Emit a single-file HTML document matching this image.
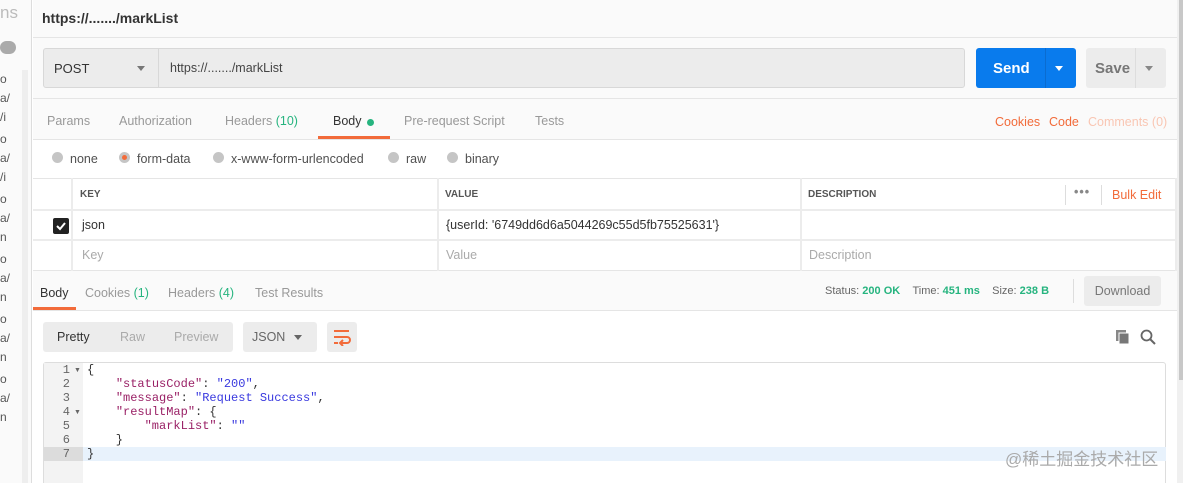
<!DOCTYPE html>
<html><head><meta charset="utf-8"><style>
*{box-sizing:border-box;margin:0;padding:0}
html,body{width:1183px;height:483px;overflow:hidden}
body{background:#fff;font-family:"Liberation Sans","Noto Sans CJK SC",sans-serif;font-size:12.5px;color:#505050;position:relative}
.a{position:absolute}
.g{color:#26b47f}
.o{color:#f26b3a}
.mono{font-family:"Liberation Mono",monospace;font-size:12px}
.sb div{height:60px;line-height:19px}
</style></head><body>
<!-- sidebar -->
<div class="a" style="left:0;top:0;width:32px;height:483px;background:#fafafa;border-right:1px solid #ddd"></div>
<div class="a" style="left:0;top:3px;color:#bbb;font-size:17px">ns</div>
<div class="a" style="left:0;top:41px;width:16px;height:13px;border-radius:7px;background:#aaa"></div>
<div class="a" style="left:22px;top:70px;width:6px;height:413px;background:#eee"></div>
<div class="a sb" style="left:0;top:70px;font-size:12px;color:#555">
<div>o<br>a/<br>/i</div><div>o<br>a/<br>/i</div><div>o<br>a/<br>n</div><div>o<br>a/<br>n</div><div>o<br>a/<br>n</div><div>o<br>a/<br>n</div>
</div>
<!-- main -->
<div class="a" style="left:33px;top:0;width:1144px;height:140px;background:#fafafa"></div>
<div class="a" style="left:33px;top:37px;width:1144px;height:1px;background:#e5e5e5"></div>
<div class="a" style="left:42px;top:10px;font-size:14px;font-weight:bold;color:#333">https://......./markList</div>
<div class="a" style="left:43px;top:48px;width:922px;height:40px;background:#ececec;border:1px solid #d8d8d8;border-radius:3px"></div>
<div class="a" style="left:158px;top:49px;width:1px;height:38px;background:#d8d8d8"></div>
<div class="a" style="left:54px;top:61px;font-size:13px;color:#333">POST</div>
<div class="a" style="left:137px;top:66px;border:4.5px solid transparent;border-top:5px solid #777"></div>
<div class="a" style="left:170px;top:61px;color:#444">https://......./markList</div>
<div class="a" style="left:976px;top:48px;width:100px;height:40px;background:#097bed;border-radius:3px"></div>
<div class="a" style="left:1045px;top:48px;width:1px;height:40px;background:#0a6cd0"></div>
<div class="a" style="left:993px;top:60px;color:#fff;font-weight:bold;font-size:15px">Send</div>
<div class="a" style="left:1055px;top:66px;border:4.5px solid transparent;border-top:5px solid #fff"></div>
<div class="a" style="left:1086px;top:48px;width:80px;height:40px;background:#ececec;border-radius:3px"></div>
<div class="a" style="left:1135px;top:48px;width:1px;height:40px;background:#ddd"></div>
<div class="a" style="left:1095px;top:60px;color:#777;font-weight:bold;font-size:15px">Save</div>
<div class="a" style="left:1145px;top:66px;border:4.5px solid transparent;border-top:5px solid #888"></div>
<div class="a" style="left:33px;top:98px;width:1144px;height:1px;background:#e5e5e5"></div>
<div class="a" style="left:47px;top:114px;color:#999">Params</div>
<div class="a" style="left:119px;top:114px;color:#999">Authorization</div>
<div class="a" style="left:225px;top:114px;color:#999">Headers <span class="g">(10)</span></div>
<div class="a" style="left:333px;top:114px;color:#333">Body</div>
<div class="a" style="left:367px;top:119px;width:7px;height:7px;border-radius:50%;background:#26b47f"></div>
<div class="a" style="left:318px;top:136px;width:72px;height:3px;background:#f26b3a"></div>
<div class="a" style="left:404px;top:114px;color:#999">Pre-request Script</div>
<div class="a" style="left:535px;top:114px;color:#999">Tests</div>
<div class="a o" style="left:995px;top:115px">Cookies</div>
<div class="a o" style="left:1049px;top:115px">Code</div>
<div class="a" style="left:1088px;top:115px;color:#f9c6b3">Comments (0)</div>
<div class="a" style="left:33px;top:139px;width:1144px;height:1px;background:#e5e5e5"></div>
<!-- radios -->
<div class="a" style="left:52px;top:152px;width:11px;height:11px;border-radius:50%;background:#c5c5c5"></div>
<div class="a" style="left:70px;top:152px">none</div>
<div class="a" style="left:119px;top:152px;width:11px;height:11px;border-radius:50%;background:#c5c5c5"></div>
<div class="a" style="left:122px;top:155px;width:5px;height:5px;border-radius:50%;background:#f26b3a"></div>
<div class="a" style="left:137px;top:152px">form-data</div>
<div class="a" style="left:213px;top:152px;width:11px;height:11px;border-radius:50%;background:#c5c5c5"></div>
<div class="a" style="left:231px;top:152px">x-www-form-urlencoded</div>
<div class="a" style="left:388px;top:152px;width:11px;height:11px;border-radius:50%;background:#c5c5c5"></div>
<div class="a" style="left:406px;top:152px">raw</div>
<div class="a" style="left:447px;top:152px;width:11px;height:11px;border-radius:50%;background:#c5c5c5"></div>
<div class="a" style="left:465px;top:152px">binary</div>
<!-- table -->
<div class="a" style="left:33px;top:178px;width:1144px;height:93px;border-top:1px solid #e5e5e5;border-bottom:1px solid #e5e5e5"></div>
<div class="a" style="left:33px;top:209px;width:1144px;height:2px;background:#ececec"></div>
<div class="a" style="left:33px;top:239px;width:1144px;height:2px;background:#ececec"></div>
<div class="a" style="left:71px;top:178px;width:2px;height:93px;background:#ececec"></div>
<div class="a" style="left:437px;top:178px;width:2px;height:93px;background:#ececec"></div>
<div class="a" style="left:800px;top:178px;width:2px;height:93px;background:#ececec"></div>
<div class="a" style="left:1175px;top:178px;width:2px;height:93px;background:#ececec"></div>
<div class="a" style="left:1065px;top:185px;width:1px;height:20px;background:#ddd"></div>
<div class="a" style="left:1101px;top:185px;width:1px;height:20px;background:#ddd"></div>
<div class="a" style="left:80px;top:189px;font-size:10px;font-weight:bold;color:#555">KEY</div>
<div class="a" style="left:445px;top:189px;font-size:10px;font-weight:bold;color:#555">VALUE</div>
<div class="a" style="left:808px;top:189px;font-size:10px;font-weight:bold;color:#555">DESCRIPTION</div>
<div class="a" style="left:1074px;top:185px;color:#888;letter-spacing:1px;font-weight:bold">•••</div>
<div class="a o" style="left:1112px;top:188px">Bulk Edit</div>
<div class="a" style="left:53px;top:218px;width:16px;height:16px;background:#222;border-radius:2px"></div>
<svg class="a" style="left:55px;top:220px" width="12" height="12"><path d="M2 6 L5 9 L10 3" stroke="#fff" stroke-width="2" fill="none"/></svg>
<div class="a" style="left:82px;top:218px;color:#333">json</div>
<div class="a" style="left:446px;top:218px;color:#333">{userId: '6749dd6d6a5044269c55d5fb75525631'}</div>
<div class="a" style="left:82px;top:248px;color:#aaa">Key</div>
<div class="a" style="left:446px;top:248px;color:#aaa">Value</div>
<div class="a" style="left:809px;top:248px;color:#aaa">Description</div>
<!-- response -->
<div class="a" style="left:33px;top:271px;width:1144px;height:40px;background:#fafafa;border-bottom:1px solid #e5e5e5"></div>
<div class="a" style="left:40px;top:286px;color:#333">Body</div>
<div class="a" style="left:33px;top:307px;width:43px;height:3px;background:#f26b3a"></div>
<div class="a" style="left:85px;top:286px;color:#999">Cookies <span class="g">(1)</span></div>
<div class="a" style="left:168px;top:286px;color:#999">Headers <span class="g">(4)</span></div>
<div class="a" style="left:255px;top:286px;color:#999">Test Results</div>
<div class="a" style="left:825px;top:285px;font-size:11px;color:#666">Status: <span class="g" style="font-weight:bold">200 OK</span>&nbsp;&nbsp;&nbsp;&nbsp;Time: <span class="g" style="font-weight:bold">451 ms</span>&nbsp;&nbsp;&nbsp;&nbsp;Size: <span class="g" style="font-weight:bold">238 B</span></div>
<div class="a" style="left:1073px;top:279px;width:1px;height:24px;background:#ddd"></div>
<div class="a" style="left:1084px;top:276px;width:77px;height:30px;background:#ececec;border-radius:3px;color:#777;text-align:center;line-height:30px">Download</div>
<div class="a" style="left:43px;top:322px;width:190px;height:30px;background:#ececec;border-radius:3px"></div>
<div class="a" style="left:57px;top:330px;color:#333">Pretty</div>
<div class="a" style="left:120px;top:330px;color:#aaa">Raw</div>
<div class="a" style="left:174px;top:330px;color:#aaa">Preview</div>
<div class="a" style="left:243px;top:322px;width:74px;height:30px;background:#ececec;border-radius:3px"></div>
<div class="a" style="left:252px;top:330px;color:#666">JSON</div>
<div class="a" style="left:294px;top:335px;border:4.5px solid transparent;border-top:5px solid #666"></div>
<div class="a" style="left:327px;top:322px;width:30px;height:30px;background:#ececec;border-radius:3px"></div>
<svg class="a" style="left:333px;top:328px" width="18" height="18"><path d="M1 3H16M1 9H14a3 3 0 0 1 0 6H8M1 15H5M10 12L7 15L10 18" stroke="#f26b3a" stroke-width="2" fill="none"/></svg>
<svg class="a" style="left:1115px;top:329px" width="16" height="16"><rect x="1" y="1" width="10" height="11" fill="#888"/><rect x="4" y="4" width="10" height="11" fill="#777" stroke="#fff" stroke-width="1"/></svg>
<svg class="a" style="left:1140px;top:329px" width="16" height="16"><circle cx="6.5" cy="6.5" r="5" stroke="#666" stroke-width="1.8" fill="none"/><path d="M10 10L15 15" stroke="#666" stroke-width="2"/></svg>
<!-- editor -->
<div class="a" style="left:43px;top:362px;width:1123px;height:130px;border:1px solid #ddd;border-radius:3px"></div>
<div class="a" style="left:44px;top:363px;width:39px;height:120px;background:#f3f3f3"></div>
<div class="a" style="left:83px;top:447px;width:1083px;height:14px;background:#e8f2fc"></div>
<div class="a" style="left:44px;top:447px;width:39px;height:14px;background:#dcdcdc"></div>
<div class="a mono" style="left:44px;top:363px;width:26px;text-align:right;line-height:14px;color:#666">1<br>2<br>3<br>4<br>5<br>6<br>7</div>
<div class="a" style="left:74px;top:367px;font-size:7px;color:#666">▼</div>
<div class="a" style="left:74px;top:409px;font-size:7px;color:#666">▼</div>
<div class="a mono" style="left:87px;top:363px;line-height:14px;color:#333;white-space:pre">{
    <span style="color:#9a2166">"statusCode"</span>: <span style="color:#3a3adf">"200"</span>,
    <span style="color:#9a2166">"message"</span>: <span style="color:#3a3adf">"Request Success"</span>,
    <span style="color:#9a2166">"resultMap"</span>: {
        <span style="color:#9a2166">"markList"</span>: <span style="color:#3a3adf">""</span>
    }
}</div>
<div class="a" style="left:1005px;top:445px;font-size:17px;color:#aaa">@稀土掘金技术社区</div>
<div class="a" style="left:1177px;top:0;width:6px;height:483px;background:#f0f0f0"></div>
<div class="a" style="left:1179px;top:0;width:4px;height:380px;background:#c8c8c8"></div>
</body></html>
